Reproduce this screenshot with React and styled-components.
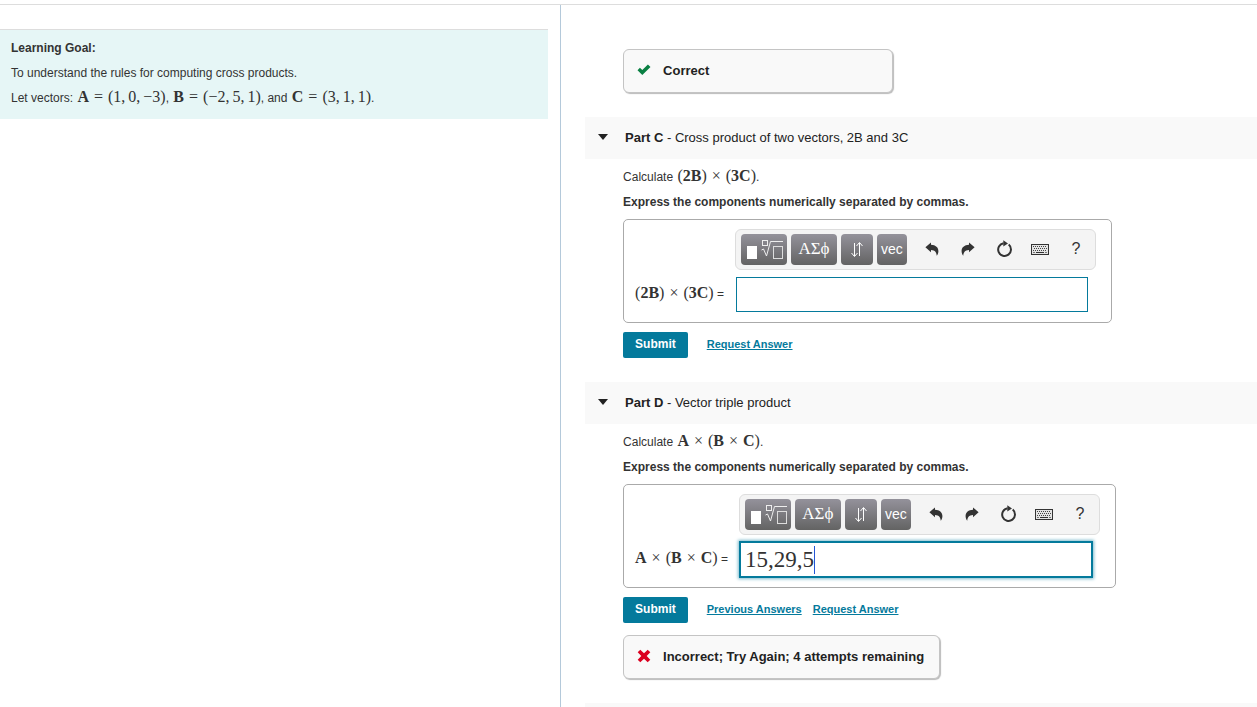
import React, { useState } from "react";
import styled, { createGlobalStyle } from "styled-components";

const GlobalStyle = createGlobalStyle`
  * {
    box-sizing: border-box;
  }
  body {
    margin: 0;
    background: #fff;
    color: #333;
    font-family: "Liberation Sans", Arial, sans-serif;
    font-size: 12px;
  }
`;

const TemplateIcon = () => (
  <svg width="38" height="24" viewBox="0 0 38 24" fill="none">
    <rect x="2" y="9" width="10" height="13" fill="#fff" />
    <rect x="17.5" y="3.5" width="5" height="5" stroke="#eee" />
    <path d="M16.5 13l2-1 3 7 4-14.500h12.500" stroke="#eee" />
    <rect x="28.5" y="9.5" width="9" height="12" stroke="#ddd" />
  </svg>
);

const ArrowsIcon = () => (
  <svg width="12" height="16" viewBox="0 0 12 16" fill="none" stroke="#fff">
    <path d="M3.5 2v13M0.5 12l3 3.5 3-3.5" />
    <path d="M8.5 15V2M5.5 5l3-3.5 3 3.5" />
  </svg>
);

const UndoIcon = ({ flip }) => (
  <svg width="14" height="14" viewBox="0 0 14 14">
    <path
      transform={flip ? "matrix(-1 0 0 1 14 0)" : undefined}
      fill="#333"
      d="M0.4 5.2L6 0.4V2.8C10.6 2.9 13.6 5.6 13.4 9.4C13.3 11.2 12.6 12.8 11.7 13.8C11.7 10.6 10.2 8.1 6 7.9V10.2Z"
    />
  </svg>
);

const ResetIcon = () => (
  <svg width="18" height="18" viewBox="0 0 18 18" fill="none">
    <path
      d="M13.7 4.6A6.4 6.4 0 1 1 8.500 3.200"
      stroke="#333"
      strokeWidth="2"
    />
    <path d="M8.300 0.200L13 3.400L8.300 6.400Z" fill="#333" />
  </svg>
);

const KeyboardIcon = () => (
  <svg width="18" height="11" viewBox="0 0 18 11" fill="none">
    <rect x="0.5" y="0.5" width="17" height="10" fill="#e4e4e4" stroke="#333" />
    <path d="M2 2.5h14M3 4.5h13M2 6.5h14" stroke="#444" strokeDasharray="1 1" />
    <path d="M2 8.5h2M14 8.5h2" stroke="#777" />
    <path d="M5 8.500h8" stroke="#333" />
  </svg>
);

const CheckIcon = () => (
  <svg width="14" height="12" viewBox="0 0 14 12">
    <path
      d="M0.5 6.2L2.9 3.7L5.300 5.900L10.900 0.600L13.500 3.100L5.300 10.900Z"
      fill="#0a8043"
    />
  </svg>
);

const CrossIcon = () => (
  <svg width="14" height="14" viewBox="0 0 14 14">
    <path
      d="M3.3 0.7L7 4.3L10.7 0.7L13.3 3.3L9.7 7L13.3 10.7L10.7 13.3L7 9.7L3.3 13.3L0.7 10.7L4.3 7L0.7 3.3Z"
      fill="#db0020"
    />
  </svg>
);

const CrossProductC = () => (
  <Formula>
    (<b>2B</b>)<Operator>×</Operator>(<b>3C</b>)
  </Formula>
);

const CrossProductD = () => (
  <Formula>
    <b>A</b>
    <Operator>×</Operator>(<b>B</b>
    <Operator>×</Operator>
    <b>C</b>)
  </Formula>
);

const Vector = ({ name, values }) => (
  <Formula>
    <b>{name}</b>
    <Operator>=</Operator>(
    {values.map((value, i) => (
      <Component key={i}>
        {value}
        {i < values.length - 1 && ","}
      </Component>
    ))}
    )
  </Formula>
);

// digits are half an em wide in the serif face, commas a quarter
const textWidth = (text) =>
  [...text].reduce((sum, char) => sum + (char === "," ? 0.25 : 0.5), 0);

const AnswerEditor = ({ id, label, initial = "", active }) => {
  const [answer, setAnswer] = useState(initial);

  return (
    <EditorBox>
      <Toolbar>
        <ToolButton $width={46} aria-label="Templates">
          <TemplateIcon />
        </ToolButton>
        <ToolButton $width={46} $greek>
          ΑΣϕ
        </ToolButton>
        <ToolButton $width={32} aria-label="Subscript and superscript">
          <ArrowsIcon />
        </ToolButton>
        <ToolButton $width={30}>vec</ToolButton>
        <Actions>
          <ActionButton aria-label="Undo">
            <UndoIcon />
          </ActionButton>
          <ActionButton aria-label="Redo">
            <UndoIcon flip />
          </ActionButton>
          <ActionButton aria-label="Reset">
            <ResetIcon />
          </ActionButton>
          <ActionButton aria-label="Keyboard shortcuts">
            <KeyboardIcon />
          </ActionButton>
          <ActionButton aria-label="Help">?</ActionButton>
        </Actions>
      </Toolbar>
      <AnswerLabel htmlFor={id}>{label} =</AnswerLabel>
      <AnswerField>
        <AnswerInput
          id={id}
          value={answer}
          autoFocus={active}
          autoComplete="off"
          $active={active}
          onChange={(e) => setAnswer(e.target.value)}
        />
        {active && <TextCursor style={{ left: `${textWidth(answer)}em` }} />}
      </AnswerField>
    </EditorBox>
  );
};

const PartHeader = ({ part, title }) => (
  <Header>
    <Caret />
    <span>
      <b>{part}</b> - {title}
    </span>
  </Header>
);

const App = () => {
  return (
    <>
      <GlobalStyle />
      <Page>
        <Sidebar>
          <Goal>
            <p>
              <b>Learning Goal:</b>
            </p>
            <p>To understand the rules for computing cross products.</p>
            <p>
              Let vectors: <Vector name="A" values={["1", "0", "−3"]} />,{" "}
              <Vector name="B" values={["−2", "5", "1"]} />, and{" "}
              <Vector name="C" values={["3", "1", "1"]} />.
            </p>
          </Goal>
        </Sidebar>
        <Main>
          <Feedback>
            <CheckIcon />
            Correct
          </Feedback>

          <PartHeader part="Part C" title="Cross product of two vectors, 2B and 3C" />
          <Body>
            <Text>
              Calculate <CrossProductC />.
            </Text>
            <Text $bold>Express the components numerically separated by commas.</Text>
            <AnswerEditor id="part-c" label={<CrossProductC />} />
            <Buttons>
              <Submit>Submit</Submit>
              <Link href="#answer">Request Answer</Link>
            </Buttons>
          </Body>

          <PartHeader part="Part D" title="Vector triple product" />
          <Body $answered>
            <Text>
              Calculate <CrossProductD />.
            </Text>
            <Text $bold>Express the components numerically separated by commas.</Text>
            <AnswerEditor id="part-d" label={<CrossProductD />} initial="15,29,5" active />
            <Buttons>
              <Submit>Submit</Submit>
              <Link href="#previous">Previous Answers</Link>
              <Link href="#answer">Request Answer</Link>
            </Buttons>
          </Body>
          <Feedback>
            <CrossIcon />
            Incorrect; Try Again; 4 attempts remaining
          </Feedback>
          <Header />
        </Main>
      </Page>
    </>
  );
};

const Page = styled.div`
  display: grid;
  grid-template-columns: 45fr 56fr;
  height: calc(100vh - 4px);
  margin-top: 4px;
  border-top: 1px solid #ddd;
  overflow: hidden;
`;

const Sidebar = styled.aside`
  padding: 24px 12px 0 0;
`;

const Goal = styled.section`
  padding: 6px 11px 8px;
  border-top: 1px solid #ddd;
  background: #e6f6f6;
  p {
    margin: 0;
    line-height: 25px;
  }
`;

const Main = styled.main`
  min-width: 0;
  padding: 44px 0 0 24px;
  border-left: 1px solid #b4c9da;
  overflow: hidden;
`;

const Feedback = styled.div`
  display: flex;
  align-items: center;
  gap: 12px;
  width: fit-content;
  min-width: 270px;
  height: 44px;
  margin: 0 0 24px 38px;
  padding: 0 15px 2px 13px;
  border: 1px solid #c4c4c4;
  border-radius: 6px;
  background: #f9f9f9;
  box-shadow: 1px 1px 1px #bbb;
  color: #222;
  font-size: 13px;
  font-weight: bold;
`;

const Header = styled.header`
  display: flex;
  align-items: center;
  gap: 17px;
  height: 42px;
  padding: 0 0 2px 13px;
  background: #f9f9f9;
  color: #222;
  font-size: 13px;
`;

const Caret = styled.span`
  border: 5px solid transparent;
  border-top: 6px solid #222;
  border-bottom: 0;
`;

const Body = styled.div`
  padding: 6px 0 ${(props) => (props.$answered ? 12 : 24)}px 38px;
`;

const Text = styled.p`
  margin: 0;
  line-height: 25px;
  font-weight: ${(props) => (props.$bold ? "bold" : "normal")};
`;

const Formula = styled.span`
  margin-left: 1px;
  font-family: "Liberation Serif", "Times New Roman", serif;
  font-size: 16px;
  line-height: 20px;
  white-space: nowrap;
`;

const Operator = styled.span`
  margin: 0 5px;
`;

const Component = styled.span`
  & + & {
    margin-left: 3px;
  }
`;

const EditorBox = styled.div`
  display: grid;
  grid-template-columns: auto auto;
  column-gap: 11px;
  row-gap: 7px;
  align-items: center;
  width: fit-content;
  margin-top: 4px;
  padding: 9px 15px 10px 10px;
  border: 1px solid #aaa;
  border-radius: 5px;
`;

const Toolbar = styled.div`
  display: flex;
  grid-column: 2;
  gap: 4px;
  height: 41px;
  padding: 4px 1px 4px 5px;
  border: 1px solid #ddd;
  border-radius: 6px;
  background: #f4f4f4;
`;

const ToolButton = styled.button`
  display: flex;
  align-items: center;
  justify-content: center;
  width: ${(props) => props.$width}px;
  height: 31px;
  padding: 0 0 2px;
  border: 0;
  border-radius: 4px;
  background: linear-gradient(#94929b, #636363);
  color: #fff;
  font-family: ${(props) =>
    props.$greek ? '"Liberation Serif", serif' : '"Liberation Sans", sans-serif'};
  font-size: ${(props) => (props.$greek ? 17 : 14)}px;
`;

const Actions = styled.div`
  display: flex;
  margin-left: 3px;
`;

const ActionButton = styled.button`
  display: flex;
  align-items: center;
  justify-content: center;
  width: 36px;
  height: 31px;
  padding: 0 0 1px;
  border: 0;
  background: none;
  color: #333;
  font-family: "Liberation Sans", Arial, sans-serif;
  font-size: 16px;
`;

const AnswerLabel = styled.label`
  padding-bottom: 4px;
  white-space: nowrap;
`;

const AnswerField = styled.div`
  display: flex;
  position: relative;
  margin: 0 8px 0 1px;
  font-family: "Liberation Serif", "Times New Roman", serif;
  font-size: 23px;
`;

const AnswerInput = styled.input`
  flex: 1;
  min-width: 0;
  height: 35px;
  padding: 0 4px;
  border: 1px solid #047a9c;
  outline: ${(props) => (props.$active ? "1px solid #047a9c" : "none")};
  box-shadow: ${(props) => (props.$active ? "0 0 3px 2px #7fbccd" : "none")};
  color: #333;
  caret-color: transparent;
  font: inherit;
`;

const TextCursor = styled.span`
  position: absolute;
  top: 4px;
  width: 1px;
  height: 28px;
  margin-left: 5px;
  background: #2456d6;
`;

const Buttons = styled.div`
  display: flex;
  align-items: center;
  gap: 11px;
  padding-top: 9px;
`;

const Submit = styled.button`
  height: 26px;
  margin-right: 8px;
  padding: 0 12px 2px;
  border: 0;
  border-radius: 2px;
  background: #047a9c;
  color: #fff;
  font-family: "Liberation Sans", Arial, sans-serif;
  font-size: 12px;
  font-weight: bold;
`;

const Link = styled.a`
  padding-bottom: 2px;
  color: #047a9c;
  font-size: 11px;
  font-weight: bold;
`;

export default App;
